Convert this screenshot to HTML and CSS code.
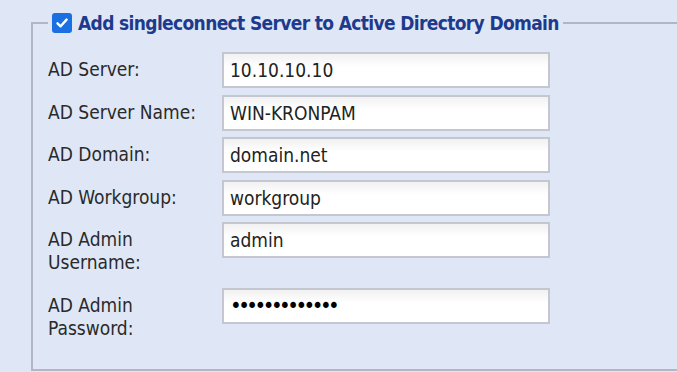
FILE: index.html
```html
<!DOCTYPE html>
<html lang="en">
<head>
    <meta charset="UTF-8">
    <meta name="viewport" content="width=device-width, initial-scale=1.0">
    <title>Active Directory</title>
    <link rel="stylesheet" href="styles.css">
</head>
<body>

    <fieldset class="ad-box">
        <legend>
            <span class="check">
                <svg width="14" height="14" viewBox="0 0 14 14"><path d="M2.5 7.3 L5.6 10.3 L11.6 3.6" fill="none" stroke="#fff" stroke-width="2.4" stroke-linecap="round" stroke-linejoin="round"/></svg>
            </span>
            <span class="legend-text">Add singleconnect Server to Active Directory Domain</span>
        </legend>

        <div class="form-grid">
            <label for="server">AD Server:</label>
            <input type="text" id="server" value="10.10.10.10">

            <label for="name">AD Server Name:</label>
            <input type="text" id="name" value="WIN-KRONPAM">

            <label for="domain">AD Domain:</label>
            <input type="text" id="domain" value="domain.net">

            <label for="workgroup">AD Workgroup:</label>
            <input type="text" id="workgroup" value="workgroup">

            <label for="user">AD Admin<br>Username:</label>
            <input type="text" id="user" value="admin">

            <label for="pass">AD Admin<br>Password:</label>
            <input type="password" id="pass" value="secretpasswd1">
        </div>
    </fieldset>

</body>
</html>
```

FILE: styles.css
```css
body {
    margin: 0;
    height: 372px;
    overflow: hidden;
    background-color: #dfe7f6;
    font-family: "DejaVu Sans Condensed", "DejaVu Sans", sans-serif;
    font-size: 19px;
    color: #2a2a2a;
}

.ad-box {
    width: 700px;
    margin: 11px 0 0 31px;
    padding: 17px 15px 22px 15px;
    border: 2px solid #b2b6c5;
}

.ad-box legend {
    display: flex;
    align-items: center;
    gap: 6px;
    padding: 0 4px;
    height: 24px;
    font-weight: bold;
    color: #1e3a8c;
}

.legend-text {
    letter-spacing: -0.65px;
}

.check {
    display: inline-flex;
    align-items: center;
    justify-content: center;
    width: 20px;
    height: 20px;
    border-radius: 3px;
    background-color: #1a6fe3;
}

.form-grid {
    display: grid;
    grid-template-columns: 174px 328px;
    row-gap: 6.5px;
    align-items: start;
}

.form-grid label {
    padding: 6px 0 7px 0;
    line-height: 23px;
}

.form-grid input {
    box-sizing: border-box;
    width: 328px;
    height: 36px;
    margin: 0;
    padding: 0 6px;
    border: 2px solid #c4c7d0;
    background: linear-gradient(#f1f1f1, #ffffff 40%);
    font-family: "DejaVu Sans Condensed", "DejaVu Sans", sans-serif;
    font-size: 19px;
    color: #222;
    outline: none;
}

.form-grid input[type="password"] {
    font-size: 22px;
    letter-spacing: -3.5px;
    color: #000;
}
```
